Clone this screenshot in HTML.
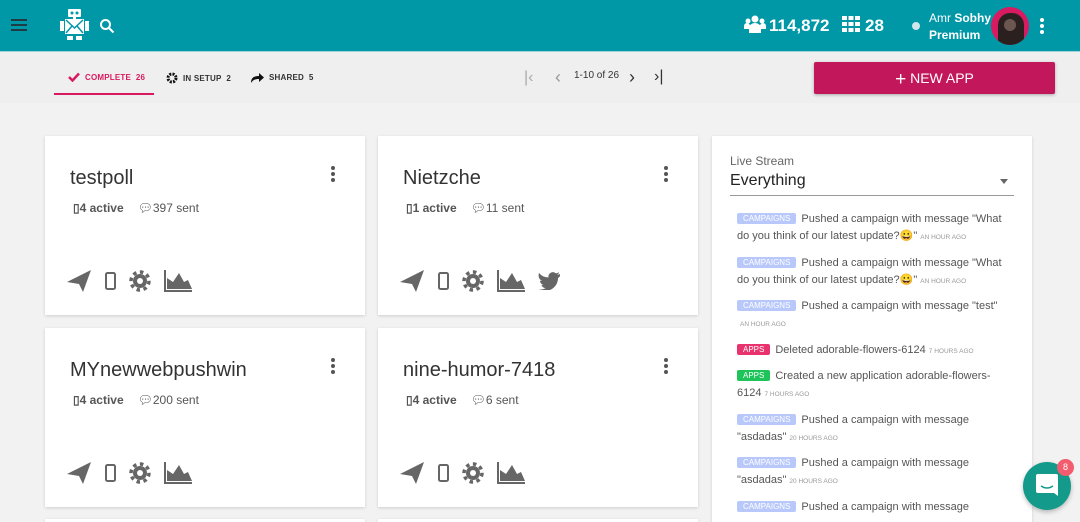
<!DOCTYPE html>
<html><head><meta charset="utf-8"><style>
*{box-sizing:border-box;margin:0;padding:0}
html,body{width:1080px;height:522px;overflow:hidden}
body{background:#f2f2f2;font-family:"Liberation Sans",Roboto,sans-serif;color:#333}
#root{position:relative;width:1080px;height:522px;overflow:hidden}
.hdr{position:absolute;left:0;top:0;width:1080px;height:51px;background:#0097a7}
.sub{position:absolute;left:0;top:51px;width:1080px;height:52px;background:#efefef;border-top:1px solid #9fd6dc}
.w{color:#fff;position:absolute}
.tab{position:absolute;top:20px;font-size:8px;font-weight:bold;color:#333;letter-spacing:.2px;display:flex;align-items:center;gap:5px}
.card{position:absolute;background:#fff;width:320px;height:179px;box-shadow:0 1px 3px rgba(0,0,0,.15)}
.card h2{position:absolute;left:25px;top:31px;font-size:20px;font-weight:normal;color:#333}
.card .st{position:absolute;left:28px;top:65px;font-size:12px;color:#555;display:flex;gap:14px}
.card .dots{position:absolute;right:30px;top:30px;width:4px}
.dots i{display:block;width:4px;height:4px;border-radius:2px;background:#555;margin-bottom:2px}
.icons{position:absolute;left:22px;top:134px;display:flex;gap:13px;align-items:center}
.live{position:absolute;left:712px;top:136px;width:320px;height:386px;background:#fff;box-shadow:0 1px 3px rgba(0,0,0,.15);overflow:hidden}
.item{position:absolute;left:25px;width:270px;font-size:11px;color:#555;line-height:17px}
.b{display:inline-block;font-size:8px;color:#fff;padding:0 6px;line-height:11px;border-radius:2px;margin-right:5px;vertical-align:1px}
.bc{background:#b8c8fb}.ba{background:#e8336f}.bg{background:#1ec45a}
.t{font-size:6.5px;color:#999;margin-left:3px}
</style></head><body><div id="root">
<div class="hdr">
 <svg class="w" style="left:11px;top:18px" width="16" height="14"><rect y="1" width="16" height="2" fill="#1d3c44"/><rect y="6" width="16" height="2" fill="#1d3c44"/><rect y="11" width="16" height="2" fill="#1d3c44"/></svg>
 <svg class="w" style="left:60px;top:9px" width="29" height="33" viewBox="0 0 29 33" fill="#fff"><rect x="8" y="0" width="13" height="8" rx="1"/><circle cx="12" cy="4" r="1.5" fill="#0097a7"/><circle cx="17" cy="4" r="1.5" fill="#0097a7"/><rect x="13" y="8" width="3" height="2"/><rect x="5" y="10" width="19" height="15"/><path d="M6 11 L14.5 19 L23 11 M6 24 L12 17 M23 24 L17 17" stroke="#0097a7" stroke-width="1.5" fill="none"/><rect x="0" y="12" width="4" height="10"/><rect x="25" y="12" width="4" height="10"/><rect x="7" y="27" width="6" height="4"/><rect x="16" y="27" width="6" height="4"/></svg>
 <svg class="w" style="left:99px;top:18px" width="16" height="16" fill="none" stroke="#fff" stroke-width="2"><circle cx="6.5" cy="6.5" r="4.5"/><path d="M10 10l4.5 4.5"/></svg>
 <svg class="w" style="left:744px;top:15px" width="22" height="19" fill="#fff"><circle cx="11" cy="4" r="3.5"/><circle cx="4" cy="6" r="2.5"/><circle cx="18" cy="6" r="2.5"/><path d="M5 18v-5a6 5 0 0112 0v5z"/><path d="M0 14v-3a3 3 0 016 0v3zM16 14v-3a3 3 0 016 0v3z"/></svg>
 <div class="w" style="left:769px;top:16px;font-size:17px;font-weight:bold">114,872</div>
 <svg class="w" style="left:842px;top:16px" width="18" height="16" fill="#fff"><rect width="5" height="4"/><rect x="6.5" width="5" height="4"/><rect x="13" width="5" height="4"/><rect y="6" width="5" height="4"/><rect x="6.5" y="6" width="5" height="4"/><rect x="13" y="6" width="5" height="4"/><rect y="12" width="5" height="4"/><rect x="6.5" y="12" width="5" height="4"/><rect x="13" y="12" width="5" height="4"/></svg>
 <div class="w" style="left:865px;top:16px;font-size:17px;font-weight:bold">28</div>
 <div class="w" style="left:912px;top:22px;width:8px;height:8px;border-radius:4px;background:#cfe6ea"></div>
 <div class="w" style="left:929px;top:11px;font-size:12px">Amr <b>Sobhy</b></div>
 <div class="w" style="left:929px;top:28px;font-size:12px;font-weight:bold">Premium</div>
 <div class="w" style="left:991px;top:7px;width:38px;height:38px;border-radius:19px;background:#d81b60;overflow:hidden"><div style="position:absolute;left:7px;top:6px;width:26px;height:34px;border-radius:12px 12px 4px 4px;background:#2b2020"></div><div style="position:absolute;left:13px;top:12px;width:12px;height:12px;border-radius:6px;background:#6b5650"></div></div>
 <div class="w dots" style="left:1040px;top:18px"><i style="background:#fff"></i><i style="background:#fff"></i><i style="background:#fff"></i></div>
</div>
<div class="sub">
 <div class="tab" style="left:68px;color:#d81b60"><svg width="12" height="10"><path d="M1 5l3.5 3.5L11 1.5" stroke="#d81b60" stroke-width="2.5" fill="none"/></svg>COMPLETE&nbsp; 26</div>
 <div style="position:absolute;left:54px;top:41px;width:100px;height:2px;background:#d81b60"></div>
 <div class="tab" style="left:166px"><svg width="12" height="12"><circle cx="6" cy="6" r="4" fill="none" stroke="#111" stroke-width="3" stroke-dasharray="2 1.2"/></svg>IN SETUP&nbsp; 2</div>
 <div class="tab" style="left:250px"><svg width="14" height="11"><path d="M1 11 C1 5 5 4 9 4 V1 L14 5.5 L9 10 V7 C5 7 3 8 1 11z" fill="#111"/></svg>SHARED&nbsp; 5</div>
 <div style="position:absolute;left:524px;top:17px;font-size:16px;color:#aaa">|‹</div>
 <div style="position:absolute;left:555px;top:15px;font-size:18px;color:#999">‹</div>
 <div style="position:absolute;left:574px;top:18px;font-size:10px;color:#333">1-10 of 26</div>
 <div style="position:absolute;left:629px;top:15px;font-size:18px;color:#333">›</div>
 <div style="position:absolute;left:654px;top:16px;font-size:16px;color:#333">›|</div>
 <div style="position:absolute;left:814px;top:10px;width:241px;height:32px;background:#c2185b;color:#fff;font-size:14px;text-align:center;line-height:32px;box-shadow:0 1px 3px rgba(0,0,0,.3);border-radius:2px"><span style="font-size:19px;vertical-align:-2px">+</span> NEW APP</div>
</div>

<div class="card" style="left:45px;top:136px"><h2>testpoll</h2><div class="dots"><i></i><i></i><i></i></div><div class="st"><span><b>▯4 active</b></span><span>💬︎397 sent</span></div><div class="icons">
<svg width="24" height="22" fill="#666"><path d="M0 12L24 0 16 22 12 14z"/></svg><svg width="12" height="18"><rect x="2" y="1" width="9" height="16" rx="1.5" fill="none" stroke="#666" stroke-width="2"/></svg><svg width="22" height="22" fill="#666"><circle cx="11" cy="11" r="7"/><circle cx="11" cy="11" r="9" fill="none" stroke="#666" stroke-width="3.5" stroke-dasharray="3.5 3.5"/><circle cx="11" cy="11" r="3" fill="#fff"/></svg><svg width="28" height="22" fill="#666"><path d="M1 0v21h27" stroke="#666" stroke-width="2" fill="none"/><path d="M3 19V8l6 4 6-9 5 9 4-2 4 9z"/></svg></div></div>
<div class="card" style="left:378px;top:136px"><h2>Nietzche</h2><div class="dots"><i></i><i></i><i></i></div><div class="st"><span><b>▯1 active</b></span><span>💬︎11 sent</span></div><div class="icons">
<svg width="24" height="22" fill="#666"><path d="M0 12L24 0 16 22 12 14z"/></svg><svg width="12" height="18"><rect x="2" y="1" width="9" height="16" rx="1.5" fill="none" stroke="#666" stroke-width="2"/></svg><svg width="22" height="22" fill="#666"><circle cx="11" cy="11" r="7"/><circle cx="11" cy="11" r="9" fill="none" stroke="#666" stroke-width="3.5" stroke-dasharray="3.5 3.5"/><circle cx="11" cy="11" r="3" fill="#fff"/></svg><svg width="28" height="22" fill="#666"><path d="M1 0v21h27" stroke="#666" stroke-width="2" fill="none"/><path d="M3 19V8l6 4 6-9 5 9 4-2 4 9z"/></svg><svg width="22" height="18" fill="#666"><path d="M22 2c-1 .5-2 .7-3 .8 1-.6 2-1.6 2-2.6-1 .6-2 1-3 1.2A4.5 4.5 0 0010.5 5.5 12.8 12.8 0 011 1s-2 5 3 8c-1 0-2-.3-2-.5 0 2.3 1.5 4 3.5 4.5-.7.2-1.5.2-2 0 .6 2 2.4 3 4.3 3A9 9 0 011 17.5 13 13 0 0020 6.5V6c1-.7 1.6-1.4 2-2z"/></svg></div></div>
<div class="card" style="left:45px;top:328px"><h2>MYnewwebpushwin</h2><div class="dots"><i></i><i></i><i></i></div><div class="st"><span><b>▯4 active</b></span><span>💬︎200 sent</span></div><div class="icons">
<svg width="24" height="22" fill="#666"><path d="M0 12L24 0 16 22 12 14z"/></svg><svg width="12" height="18"><rect x="2" y="1" width="9" height="16" rx="1.5" fill="none" stroke="#666" stroke-width="2"/></svg><svg width="22" height="22" fill="#666"><circle cx="11" cy="11" r="7"/><circle cx="11" cy="11" r="9" fill="none" stroke="#666" stroke-width="3.5" stroke-dasharray="3.5 3.5"/><circle cx="11" cy="11" r="3" fill="#fff"/></svg><svg width="28" height="22" fill="#666"><path d="M1 0v21h27" stroke="#666" stroke-width="2" fill="none"/><path d="M3 19V8l6 4 6-9 5 9 4-2 4 9z"/></svg></div></div>
<div class="card" style="left:378px;top:328px"><h2>nine-humor-7418</h2><div class="dots"><i></i><i></i><i></i></div><div class="st"><span><b>▯4 active</b></span><span>💬︎6 sent</span></div><div class="icons">
<svg width="24" height="22" fill="#666"><path d="M0 12L24 0 16 22 12 14z"/></svg><svg width="12" height="18"><rect x="2" y="1" width="9" height="16" rx="1.5" fill="none" stroke="#666" stroke-width="2"/></svg><svg width="22" height="22" fill="#666"><circle cx="11" cy="11" r="7"/><circle cx="11" cy="11" r="9" fill="none" stroke="#666" stroke-width="3.5" stroke-dasharray="3.5 3.5"/><circle cx="11" cy="11" r="3" fill="#fff"/></svg><svg width="28" height="22" fill="#666"><path d="M1 0v21h27" stroke="#666" stroke-width="2" fill="none"/><path d="M3 19V8l6 4 6-9 5 9 4-2 4 9z"/></svg></div></div>
<div class="card" style="left:45px;top:519px;height:3px"></div>
<div class="card" style="left:378px;top:519px;height:3px"></div>

<div class="live">
 <div style="position:absolute;left:18px;top:18px;font-size:12px;color:#666">Live Stream</div>
 <div style="position:absolute;left:18px;top:36px;font-size:16px;color:#222">Everything</div>
 <div style="position:absolute;left:288px;top:43px;border:4px solid transparent;border-top:5px solid #666"></div>
 <div style="position:absolute;left:18px;top:59px;width:284px;height:1px;background:#999"></div>
 <div class="item" style="top:75px"><span class="b bc">CAMPAIGNS</span>Pushed a campaign with message "What do you think of our latest update?😀"<span class="t">AN HOUR AGO</span></div>
 <div class="item" style="top:119px"><span class="b bc">CAMPAIGNS</span>Pushed a campaign with message "What do you think of our latest update?😀"<span class="t">AN HOUR AGO</span></div>
 <div class="item" style="top:162px"><span class="b bc">CAMPAIGNS</span>Pushed a campaign with message "test"<br><span class="t">AN HOUR AGO</span></div>
 <div class="item" style="top:206px"><span class="b ba">APPS</span>Deleted adorable-flowers-6124<span class="t">7 HOURS AGO</span></div>
 <div class="item" style="top:232px"><span class="b bg">APPS</span>Created a new application adorable-flowers-6124<span class="t">7 HOURS AGO</span></div>
 <div class="item" style="top:276px"><span class="b bc">CAMPAIGNS</span>Pushed a campaign with message "asdadas"<span class="t">20 HOURS AGO</span></div>
 <div class="item" style="top:319px"><span class="b bc">CAMPAIGNS</span>Pushed a campaign with message "asdadas"<span class="t">20 HOURS AGO</span></div>
 <div class="item" style="top:363px"><span class="b bc">CAMPAIGNS</span>Pushed a campaign with message</div>
</div>
<div style="position:absolute;left:1023px;top:462px;width:48px;height:48px;border-radius:24px;background:#139a8a;box-shadow:0 2px 5px rgba(0,0,0,.25)">
 <svg style="position:absolute;left:13px;top:12px" width="22" height="24"><path d="M2 0h18a2 2 0 012 2v20l-4-3H2a2 2 0 01-2-2V2a2 2 0 012-2z" fill="#fff"/><path d="M5 12q6 4 12 0" stroke="#139a8a" stroke-width="1.5" fill="none"/></svg>
</div>
<div style="position:absolute;left:1057px;top:459px;width:17px;height:17px;border-radius:9px;background:#f25c6e;color:#fff;font-size:9px;text-align:center;line-height:17px">8</div>
</div></body></html>
